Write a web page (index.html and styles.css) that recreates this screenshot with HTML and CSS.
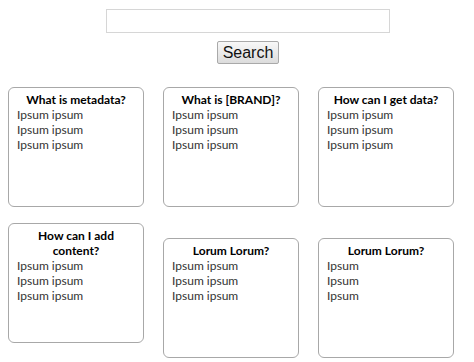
FILE: index.html
```html
<!DOCTYPE html>
<html lang="en">
<head>
    <meta charset="UTF-8">
    <meta name="viewport" content="width=device-width, initial-scale=1.0">
    <title>Help topics</title>
    <link rel="stylesheet" href="styles.css">
</head>
<body>
    <form class="search">
        <input type="text" class="search-input">
        <button type="submit" class="search-button">Search</button>
    </form>

    <div class="topics">
        <div class="topic">
            <h2>What is metadata?</h2>
            <p>Ipsum ipsum</p>
            <p>Ipsum ipsum</p>
            <p>Ipsum ipsum</p>
        </div>
        <div class="topic">
            <h2>What is [BRAND]?</h2>
            <p>Ipsum ipsum</p>
            <p>Ipsum ipsum</p>
            <p>Ipsum ipsum</p>
        </div>
        <div class="topic">
            <h2>How can I get data?</h2>
            <p>Ipsum ipsum</p>
            <p>Ipsum ipsum</p>
            <p>Ipsum ipsum</p>
        </div>
    </div>

    <div class="topics">
        <div class="topic">
            <h2>How can I add content?</h2>
            <p>Ipsum ipsum</p>
            <p>Ipsum ipsum</p>
            <p>Ipsum ipsum</p>
        </div>
        <div class="topic">
            <h2>Lorum Lorum?</h2>
            <p>Ipsum ipsum</p>
            <p>Ipsum ipsum</p>
            <p>Ipsum ipsum</p>
        </div>
        <div class="topic">
            <h2>Lorum Lorum?</h2>
            <p>Ipsum</p>
            <p>Ipsum</p>
            <p>Ipsum</p>
        </div>
    </div>
</body>
</html>
```

FILE: styles.css
```css
body {
    font-family: Lato, "Open Sans", sans-serif;
    background-color: #fff;
    margin: 0;
    padding: 9px 8px;
}
.search {
    width: 284px;
    margin: 0 0 0 98px;
    text-align: center;
}
.search-input {
    display: block;
    box-sizing: border-box;
    width: 284px;
    height: 24px;
    margin: 0;
    border: 1px solid #d6d6d6;
    padding: 2px 4px;
}
.search-button {
    display: inline-block;
    margin-top: 8px;
    height: 23px;
    padding: 0 5px;
    font-family: "Liberation Sans", Arial, sans-serif;
    font-size: 16px;
    color: #111;
    background: linear-gradient(#f8f8f8, #dcdcdc);
    border: 1px solid #a9a9a9;
    border-radius: 2px;
}
.topics {
    display: flex;
    align-items: last baseline;
    gap: 19px;
    margin-top: 23px;
}
.topics + .topics {
    margin-top: 16px;
}
.topic {
    box-sizing: border-box;
    width: 136px;
    height: 120px;
    padding: 4px 8px;
    border: 1px solid #a8a8a8;
    border-radius: 6px;
    font-size: 12px;
    line-height: 15px;
}
.topic h2 {
    margin: 0;
    font-size: 12px;
    text-align: center;
    color: #000;
}
.topic p {
    margin: 0;
    color: #333;
}
```
